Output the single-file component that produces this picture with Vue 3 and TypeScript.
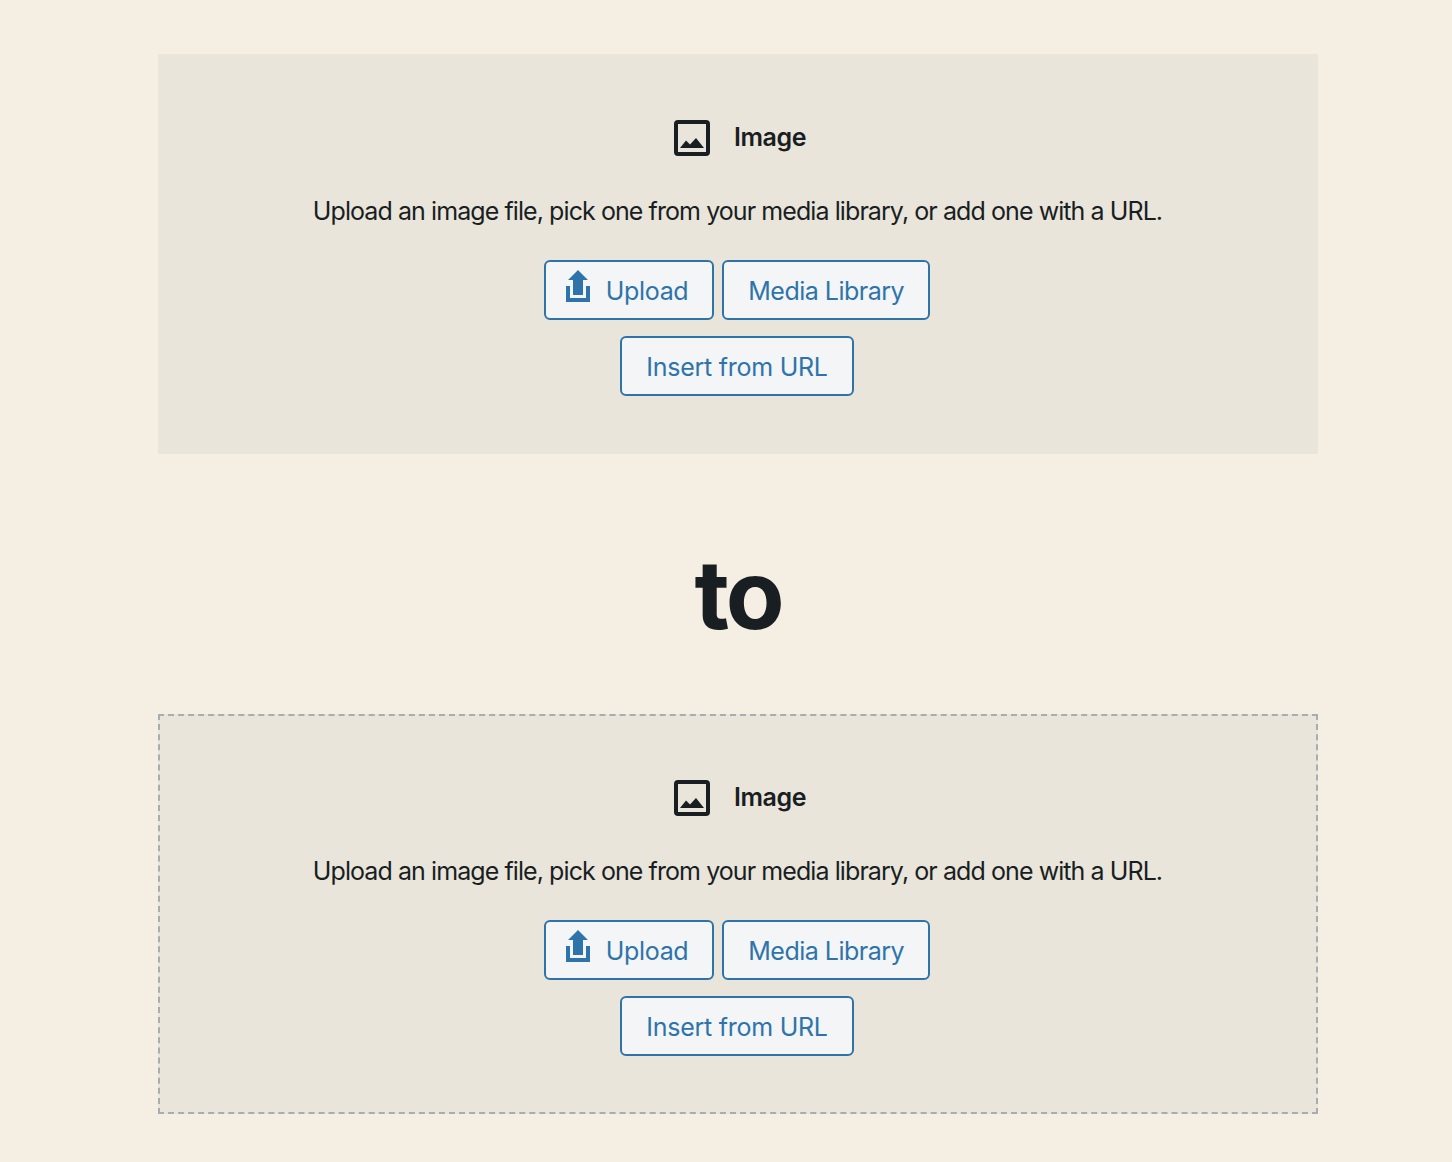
<script setup lang="ts">
interface Block {
  id: string
  dashed: boolean
}
const blocks: Block[] = [
  { id: 'before', dashed: false },
  { id: 'after', dashed: true },
]
</script>

<template>
  <div class="page">
    <template v-for="(block, index) in blocks" :key="block.id">
      <h1 v-if="index > 0" class="separator">to</h1>
      <section class="placeholder" :class="{ 'placeholder--dashed': block.dashed }">
        <div class="placeholder-label">
          <svg class="image-icon" width="36" height="36" viewBox="0 0 36 36">
            <rect x="2" y="2" width="32" height="32" rx="2" fill="none" stroke="#191e23" stroke-width="4" />
            <path d="M6 28 L12 20.5 L16 24.5 L22 18 L30 28 Z" fill="#191e23" />
          </svg>
          <span>Image</span>
        </div>
        <p class="instructions">Upload an image file, pick one from your media library, or add one with a URL.</p>
        <div class="actions">
          <button class="btn btn--upload" type="button">
            <svg class="upload-icon" width="24" height="32" viewBox="0 0 24 32">
              <path d="M12 0 L22 10 H17 V25 H7 V10 H2 Z" fill="#2e74aa" />
              <path d="M0 16 H4 V28 H20 V16 H24 V32 H0 Z" fill="#2e74aa" />
            </svg>
            Upload
          </button>
          <button class="btn btn--library" type="button">Media Library</button>
          <button class="btn btn--url" type="button">Insert from URL</button>
        </div>
      </section>
    </template>
  </div>
</template>

<style scoped>
.page {
  width: 1160px;
  height: 1162px;
  box-sizing: border-box;
  margin-left: 158px;
  padding-top: 54px;
  font-family: Inter, 'Liberation Sans', sans-serif;
}
.placeholder {
  box-sizing: border-box;
  height: 400px;
  padding-top: 66px;
  display: flex;
  flex-direction: column;
  align-items: center;
  background: #e9e5da;
}
.placeholder--dashed {
  border: 2px dashed #a8adb1;
  padding-top: 64px;
}
.placeholder-label {
  display: flex;
  align-items: center;
  gap: 24px;
  height: 36px;
  margin-left: 4px;
  font-size: 25px;
  line-height: 32px;
  font-weight: 600;
  letter-spacing: -0.45px;
  color: #191e23;
}
.placeholder-label span {
  margin-top: -2px;
}
.instructions {
  margin: 37px 0 0 -1px;
  font-size: 25px;
  line-height: 36px;
  letter-spacing: -0.92px;
  color: #191e23;
}
.actions {
  width: 460px;
  margin-top: 31px;
  margin-left: -2px;
  display: flex;
  flex-wrap: wrap;
  justify-content: center;
  gap: 16px 8px;
}
.btn {
  box-sizing: border-box;
  height: 60px;
  padding: 2px 24px 0;
  display: inline-flex;
  align-items: center;
  border: 2px solid #2e74aa;
  border-radius: 6px;
  background: #f3f5f6;
  color: #2e74aa;
  font-family: inherit;
  font-size: 25px;
  letter-spacing: -0.35px;
}
.btn--upload {
  padding-left: 20px;
}
.btn--library {
  letter-spacing: -0.5px;
}
.btn--url {
  letter-spacing: -0.25px;
}
.upload-icon {
  margin-right: 16px;
  margin-top: -10px;
}
.separator {
  margin: 0;
  height: 260px;
  padding-top: 20px;
  box-sizing: border-box;
  display: flex;
  align-items: center;
  justify-content: center;
  font-size: 96px;
  font-weight: 700;
  letter-spacing: -3px;
  color: #191e23;
}
</style>

<style>
html,
body {
  background: #f5efe3;
}
</style>
